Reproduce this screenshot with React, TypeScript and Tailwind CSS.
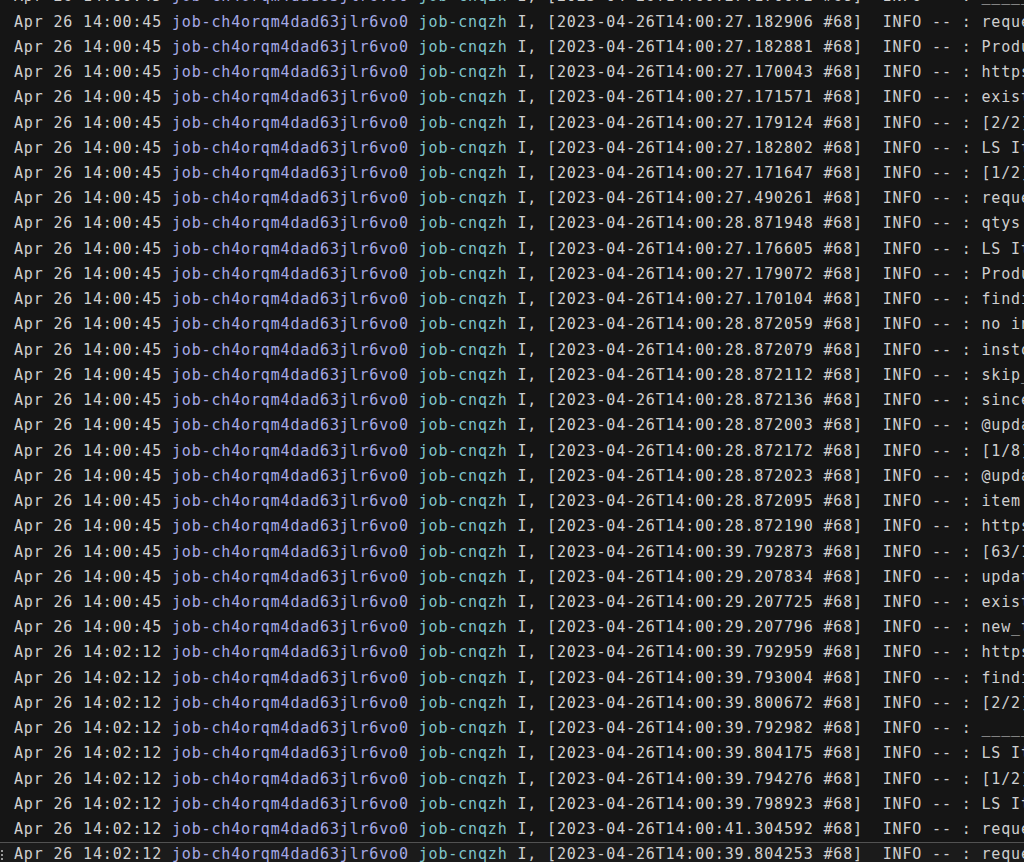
const rows: [string, string, string][] = [
  ['14:00:45', '27.170072', '____________________________________'],
  ['14:00:45', '27.182906', 'request finished in 0.42s'],
  ['14:00:45', '27.182881', 'Product sync started for store 68'],
  ['14:00:45', '27.170043', 'https://api.example.com/v2/items?page=2'],
  ['14:00:45', '27.171571', 'existing items: 214'],
  ['14:00:45', '27.179124', '[2/2] fetching inventory levels'],
  ['14:00:45', '27.182802', 'LS Items loaded: 96'],
  ['14:00:45', '27.171647', '[1/2] fetching products'],
  ['14:00:45', '27.490261', 'request GET /products 200'],
  ['14:00:45', '28.871948', 'qtys: {"in_stock"=>82, "oos"=>14}'],
  ['14:00:45', '27.176605', 'LS Items matched: 88'],
  ['14:00:45', '27.179072', 'Product variants: 312'],
  ['14:00:45', '27.170104', 'finding missing products'],
  ['14:00:45', '28.872059', 'no inventory item for sku 4410'],
  ['14:00:45', '28.872079', 'instock count updated'],
  ['14:00:45', '28.872112', 'skip_update: true'],
  ['14:00:45', '28.872136', 'since 2023-04-26T13:00:00'],
  ['14:00:45', '28.872003', '@updated_count = 0'],
  ['14:00:45', '28.872172', '[1/8] updating batch'],
  ['14:00:45', '28.872023', '@updated_ids = []'],
  ['14:00:45', '28.872095', 'item 4410 unchanged'],
  ['14:00:45', '28.872190', 'https://api.example.com/v2/inventory'],
  ['14:00:45', '39.792873', '[63/1 batches] complete'],
  ['14:00:45', '29.207834', 'updated 0 items'],
  ['14:00:45', '29.207725', 'existing variants: 312'],
  ['14:00:45', '29.207796', 'new_total: 312'],
  ['14:02:12', '39.792959', 'https://api.example.com/v2/items?page=1'],
  ['14:02:12', '39.793004', 'finding missing products'],
  ['14:02:12', '39.800672', '[2/2] fetching inventory levels'],
  ['14:02:12', '39.792982', '____________________________________'],
  ['14:02:12', '39.804175', 'LS Items loaded: 96'],
  ['14:02:12', '39.794276', '[1/2] fetching products'],
  ['14:02:12', '39.798923', 'LS Items matched: 88'],
  ['14:02:12', '41.304592', 'request finished in 1.51s'],
  ['14:02:12', '39.804253', 'request GET /inventory 200'],
];

function LogRow({ time, ts, msg, active }: { time: string; ts: string; msg: string; active: boolean }) {
  return (
    <div
      className={
        'flex h-[25.24px] items-center whitespace-pre ' +
        (active ? 'bg-[#1b1b1b] shadow-[inset_0_1px_0_#525252]' : '')
      }
    >
      {/* drag handle gutter */}
      <div className="w-[14px] shrink-0 flex items-center">
        {active && (
          <div className="flex flex-col gap-[2px] ml-[1px]">
            <span className="block w-[2px] h-[2px] bg-[#9a9a9a]" />
            <span className="block w-[2px] h-[2px] bg-[#9a9a9a]" />
            <span className="block w-[2px] h-[2px] bg-[#9a9a9a]" />
          </div>
        )}
      </div>
      <span className="text-[#cfcfcf]">Apr 26 {time} </span>
      <span className="text-[#a5a9e6]">job-ch4orqm4dad63jlr6vo0 </span>
      <span className="text-[#80c6cc]">job-cnqzh </span>
      <span className="text-[#cfcfcf]">
        I, [2023-04-26T14:00:{ts} #68]  INFO -- : {msg}
      </span>
    </div>
  );
}

export default function App() {
  return (
    <div className="w-[1024px] h-[862px] overflow-hidden bg-[#151515] font-['DejaVu_Sans_Mono',monospace] text-[15px] tracking-[0.84px]">
      <div className="mt-[-16px]">
        {rows.map(([time, ts, msg], i) => (
          <LogRow key={i} time={time} ts={ts} msg={msg} active={i === rows.length - 1} />
        ))}
      </div>
    </div>
  );
}
